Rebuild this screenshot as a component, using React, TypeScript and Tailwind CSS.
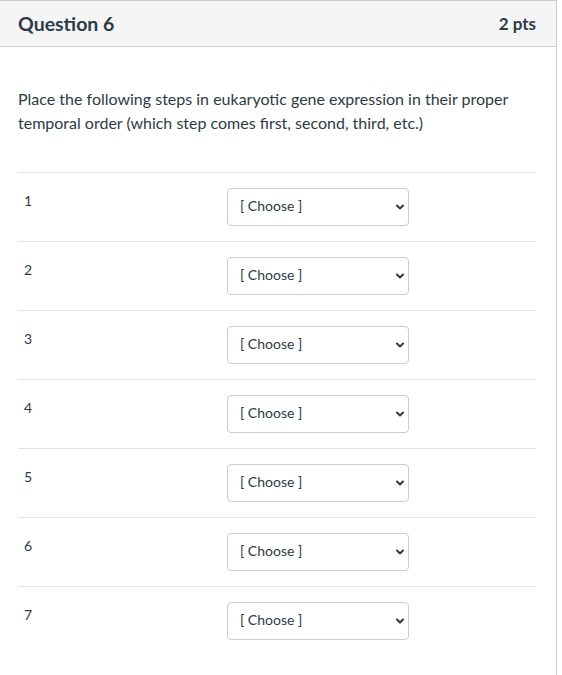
import { ChevronDown } from "lucide-react";

const steps = [1, 2, 3, 4, 5, 6, 7];

function ChooseSelect() {
  return (
    <div className="relative h-[38px] w-[182px]">
      <select
        className="block h-[38px] w-full appearance-none rounded-[4px] border border-[#c7cdd1] bg-white pb-[3px] pl-[12px] pr-8 text-[14px] text-[#2d3b45] outline-none"
        defaultValue=""
      >
        <option value="">[ Choose ]</option>
      </select>
      <ChevronDown
        className="pointer-events-none absolute right-[3px] top-[13px] h-[12px] w-[12px] text-[#2d3b45]"
        strokeWidth={4}
      />
    </div>
  );
}

export default function App() {
  return (
    <div className="min-h-[675px] bg-white font-['Lato','Liberation_Sans',sans-serif] text-[#2d3b45]">
      <div className="min-h-[675px] w-[557px] border-t border-r border-[#c7cdd1]">
        <div className="flex h-[46px] items-center justify-between border-b border-[#c7cdd1] bg-[#f5f5f5] px-[18px]">
          <h2 className="text-[19.5px] font-bold">Question 6</h2>
          <span className="mr-[2px] text-[17px] font-bold">2 pts</span>
        </div>
        <div className="px-[18px] pt-[40px]">
          <p className="text-[16px] leading-[24px]">
            Place the following steps in eukaryotic gene expression in their proper
            temporal order (which step comes first, second, third, etc.)
          </p>
          <div className="mt-[37px] w-[518px]">
            {steps.map((n) => (
              <div
                key={n}
                className="flex h-[69px] border-t border-[#e0e3e5] pt-[15px]"
              >
                <div className="w-[209px] pl-[6px] pt-[3px] text-[14px] leading-[20px]">{n}</div>
                <ChooseSelect />
              </div>
            ))}
          </div>
        </div>
      </div>
    </div>
  );
}
